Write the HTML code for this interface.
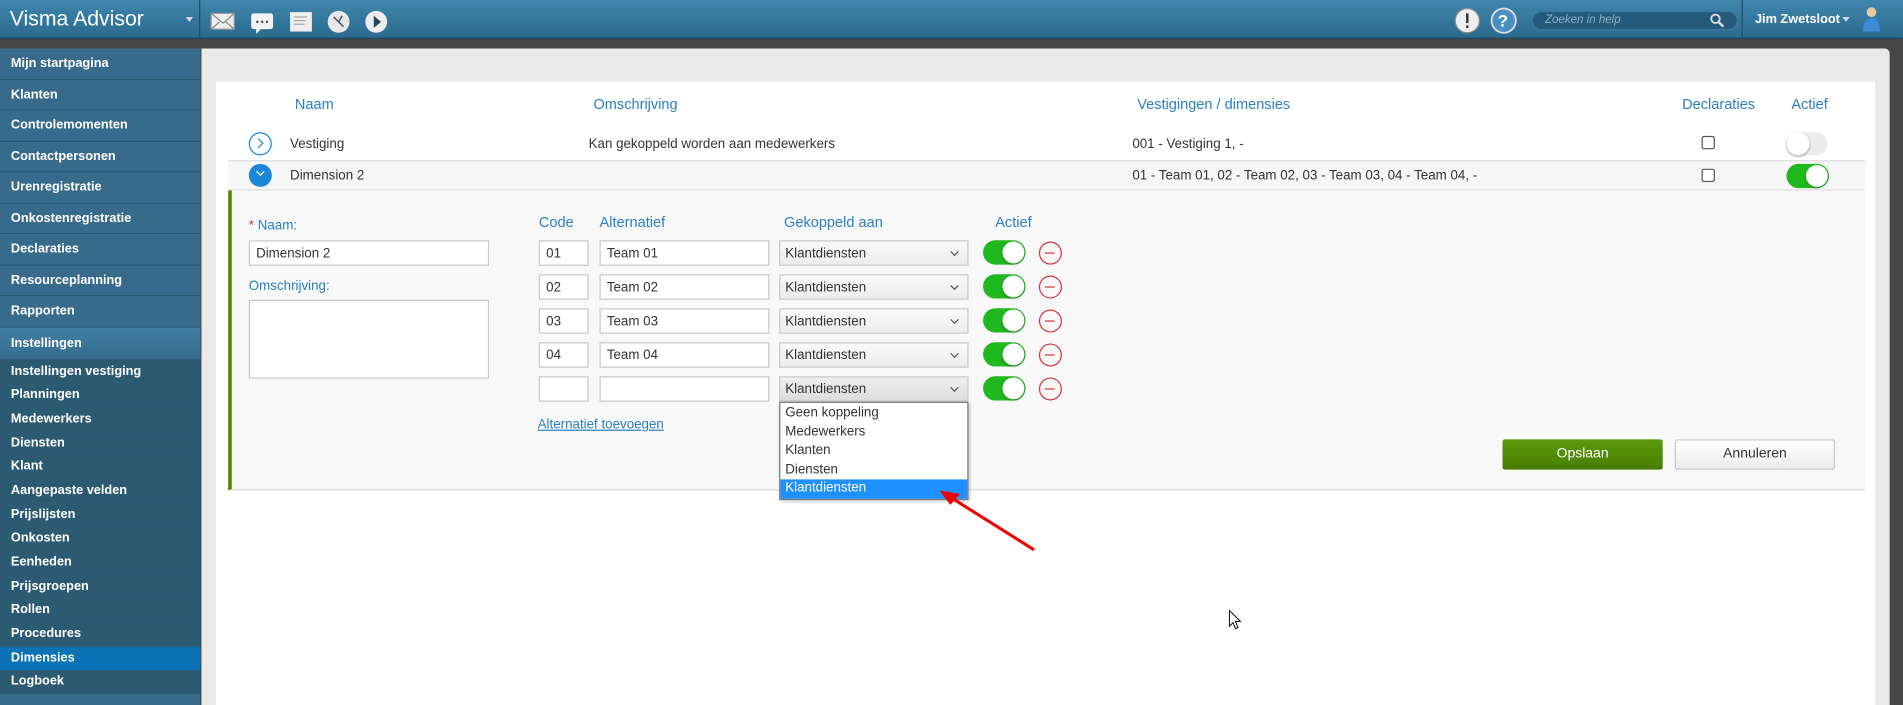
<!DOCTYPE html>
<html><head><meta charset="utf-8"><style>
*{box-sizing:border-box;margin:0;padding:0}
html,body{width:1903px;height:705px;overflow:hidden;background:#4a4a4a}
#s{position:absolute;left:0;top:0;width:1568px;height:581px;transform:scale(1.21365);transform-origin:0 0;font-family:"Liberation Sans",sans-serif;font-size:11px;color:#333;background:#464646}
.a{position:absolute}
#top{left:0;top:0;width:1568px;height:32px;background:linear-gradient(#3f86ad,#2b6a8e);border-bottom:1px solid #1e4a63}
.side{left:0;width:165px;color:#fff;font-size:10.5px;font-weight:bold;padding-left:9px}
.t1{height:25.5px;line-height:25px;background:#386b8b;border-bottom:1px solid #2a5670}
.t2{height:19.7px;line-height:19.7px;background:#2d5a73}
.h{color:#2b7fc3;font-size:12px}
.inp{background:#fff;border:1px solid #c8c8c8;height:21px;line-height:20px;padding-left:5px;font-size:11px;color:#333}
.sel{background:linear-gradient(#fafafa,#ececec);border:1px solid #c8c8c8;height:21px;line-height:21px;padding-left:4px;font-size:11px}
.sel:after{content:"";position:absolute;right:8px;top:6px;width:4px;height:4px;border-right:1px solid #555;border-bottom:1px solid #555;transform:rotate(45deg)}
.tg{width:35px;height:20px;border-radius:10px;background:#1fb81f}
.tg:after{content:"";position:absolute;right:1px;top:1px;width:18px;height:18px;border-radius:50%;background:#fff;box-shadow:0 1px 2px rgba(0,0,0,.3)}
.mn{width:19px;height:19px;border:1.5px solid #d9343f;border-radius:50%}
.mn:after{content:"";position:absolute;left:4px;top:7.5px;width:8px;height:1.5px;background:#d9343f}
.cb{width:11px;height:11px;border:1px solid #555;border-radius:2px;background:#fff}
</style></head><body><div id="s">
<div id="top" class="a">
<div class="a" style="left:8px;top:5px;color:#fff;font-size:17.5px">Visma Advisor</div>
<div class="a" style="left:153px;top:14px;border:3px solid transparent;border-top:4px solid #dde">
</div>
<div class="a" style="left:164px;top:0;width:1px;height:32px;background:#1f4f6a"></div>
<svg class="a" style="left:173px;top:8px" width="160" height="20"><rect x="1" y="3" width="19" height="13" fill="#eee" stroke="#999"/><path d="M1 3l10 8 9-8M1 16l7-6M20 16l-7-6" fill="none" stroke="#888"/>
<rect x="34" y="3" width="18" height="13" rx="2" fill="#f2f2f2"/><path d="M38 16l0 4 4-4z" fill="#f2f2f2"/><circle cx="39" cy="10" r="1" fill="#444"/><circle cx="43" cy="10" r="1" fill="#444"/><circle cx="47" cy="10" r="1" fill="#444"/>
<rect x="66" y="2" width="18" height="16" fill="#eee"/><path d="M69 6h11M69 9h10M69 12h9" stroke="#aaa"/>
<circle cx="106" cy="10" r="9" fill="#e8e8e8"/><path d="M106 10l-4-4M106 10l4 4M106 10l3-5" stroke="#556" stroke-width="1.3"/>
<circle cx="137" cy="10" r="9" fill="#ededed"/><path d="M135 5l6 5-6 5z" fill="#245"/></svg>
<svg class="a" style="left:1198px;top:6px" width="60" height="22"><circle cx="11" cy="11" r="10" fill="#eee" stroke="#888"/><rect x="10" y="5" width="2" height="8" fill="#333"/><rect x="10" y="15" width="2" height="2" fill="#333"/><circle cx="41" cy="11" r="10" fill="#4a8fc0" stroke="#ddd" stroke-width="1.5"/><text x="36" y="16" fill="#fff" font-size="14" font-family="Liberation Sans" font-weight="bold">?</text></svg>
<div class="a" style="left:1262px;top:9px;width:170px;height:16px;border-radius:8px;background:#245b7a;border:1px solid #3d7aa0;color:#8fb0c4;font-style:italic;font-size:9.5px;line-height:14px;padding-left:10px">Zoeken in help</div>
<svg class="a" style="left:1408px;top:10px" width="14" height="14"><circle cx="5.5" cy="5.5" r="3.5" fill="none" stroke="#ddd" stroke-width="1.5"/><path d="M8 8l4 4" stroke="#ddd" stroke-width="2"/></svg>
<div class="a" style="left:1435px;top:0;width:1px;height:32px;background:#1f4f6a"></div>
<div class="a" style="left:1446px;top:10px;color:#fff;font-weight:bold;font-size:10.5px">Jim Zwetsloot</div>
<div class="a" style="left:1518px;top:14px;border:3px solid transparent;border-top:4px solid #cde"></div>
<svg class="a" style="left:1533px;top:5px" width="18" height="22"><circle cx="9" cy="5" r="4" fill="#e8c9a0"/><path d="M2 21q0-11 7-11t7 11z" fill="#3a8ad6"/></svg>
</div>
<div class="a" style="left:0;top:40px;width:165px;height:541px;background:#386b8b"></div>
<div class="a" style="left:0;top:40px">
<div class="side t1">Mijn startpagina</div><div class="side t1">Klanten</div><div class="side t1">Controlemomenten</div><div class="side t1">Contactpersonen</div><div class="side t1">Urenregistratie</div><div class="side t1">Onkostenregistratie</div><div class="side t1">Declaraties</div><div class="side t1">Resourceplanning</div><div class="side t1">Rapporten</div>
<div class="side t1" style="background:linear-gradient(#427fa5,#356c8d);height:27px;line-height:26px">Instellingen</div>
<div class="side t2">Instellingen vestiging</div><div class="side t2">Planningen</div><div class="side t2">Medewerkers</div><div class="side t2">Diensten</div><div class="side t2">Klant</div><div class="side t2">Aangepaste velden</div><div class="side t2">Prijslijsten</div><div class="side t2">Onkosten</div><div class="side t2">Eenheden</div><div class="side t2">Prijsgroepen</div><div class="side t2">Rollen</div><div class="side t2">Procedures</div><div class="side t2" style="background:#0b73b5">Dimensies</div><div class="side t2">Logboek</div>
</div>
<div class="a" style="left:166px;top:40px;width:1391px;height:541px;background:#e9e9e9;border-radius:0 4px 0 0"></div>
<div class="a" style="left:178px;top:67px;width:1367px;height:514px;background:#fff"></div>
<div class="a h" style="left:243px;top:79px">Naam</div><div class="a h" style="left:489px;top:79px">Omschrijving</div><div class="a h" style="left:937px;top:79px">Vestigingen / dimensies</div><div class="a h" style="left:1386px;top:79px">Declaraties</div><div class="a h" style="left:1476px;top:79px">Actief</div>
<div class="a" style="left:205px;top:109px;width:19px;height:19px;border:1.5px solid #1a86d6;border-radius:50%"></div>
<div class="a" style="left:210px;top:115px;width:6px;height:6px;border-right:1.5px solid #1a86d6;border-top:1.5px solid #1a86d6;transform:rotate(45deg)"></div>
<div class="a" style="left:239px;top:113px">Vestiging</div><div class="a" style="left:485px;top:113px">Kan gekoppeld worden aan medewerkers</div><div class="a" style="left:933px;top:113px">001 - Vestiging 1, -</div>
<div class="a cb" style="left:1402px;top:112px"></div>
<div class="a" style="left:1472px;top:109px;width:34px;height:19px;border-radius:10px;background:#ececec"></div><div class="a" style="left:1472px;top:109px;width:19px;height:19px;border-radius:50%;background:#fff;box-shadow:0 1px 2px rgba(0,0,0,.4)"></div>
<div class="a" style="left:188px;top:132px;width:1349px;height:25px;background:#f6f6f6;border-top:1px solid #ddd;border-bottom:1px solid #ddd"></div>
<div class="a" style="left:205px;top:135px;width:19px;height:19px;background:#1a86d6;border-radius:50%"></div>
<div class="a" style="left:212px;top:139px;width:5px;height:5px;border-right:1.5px solid #fff;border-bottom:1.5px solid #fff;transform:rotate(45deg)"></div>
<div class="a" style="left:239px;top:139px">Dimension 2</div><div class="a" style="left:933px;top:139px">01 - Team 01, 02 - Team 02, 03 - Team 03, 04 - Team 04, -</div>
<div class="a cb" style="left:1402px;top:139px"></div>
<div class="a tg" style="left:1472px;top:135px"></div>
<div class="a" style="left:188px;top:157px;width:1349px;height:247px;background:#f8f8f8;border-left:3px solid #4f8a02;border-bottom:1px solid #ddd"></div>
<div class="a h" style="left:205px;top:180px;font-size:11px"><span style="color:#d33">*</span> Naam:</div>
<div class="a inp" style="left:205px;top:198px;width:198px">Dimension 2</div>
<div class="a h" style="left:205px;top:230px;font-size:11px">Omschrijving:</div>
<div class="a inp" style="left:205px;top:247px;width:198px;height:65px"></div>
<div class="a h" style="left:444px;top:176px">Code</div><div class="a h" style="left:494px;top:176px">Alternatief</div><div class="a h" style="left:646px;top:176px">Gekoppeld aan</div><div class="a h" style="left:820px;top:176px">Actief</div>
<div class="a inp" style="left:444px;top:198px;width:41px">01</div><div class="a inp" style="left:494px;top:198px;width:140px">Team 01</div><div class="a sel" style="left:642px;top:198px;width:156px">Klantdiensten</div><div class="a tg" style="left:810px;top:198px"></div><div class="a mn" style="left:856px;top:199px"></div>
<div class="a inp" style="left:444px;top:226px;width:41px">02</div><div class="a inp" style="left:494px;top:226px;width:140px">Team 02</div><div class="a sel" style="left:642px;top:226px;width:156px">Klantdiensten</div><div class="a tg" style="left:810px;top:226px"></div><div class="a mn" style="left:856px;top:227px"></div>
<div class="a inp" style="left:444px;top:254px;width:41px">03</div><div class="a inp" style="left:494px;top:254px;width:140px">Team 03</div><div class="a sel" style="left:642px;top:254px;width:156px">Klantdiensten</div><div class="a tg" style="left:810px;top:254px"></div><div class="a mn" style="left:856px;top:255px"></div>
<div class="a inp" style="left:444px;top:282px;width:41px">04</div><div class="a inp" style="left:494px;top:282px;width:140px">Team 04</div><div class="a sel" style="left:642px;top:282px;width:156px">Klantdiensten</div><div class="a tg" style="left:810px;top:282px"></div><div class="a mn" style="left:856px;top:283px"></div>
<div class="a inp" style="left:444px;top:310px;width:41px"></div><div class="a inp" style="left:494px;top:310px;width:140px"></div><div class="a sel" style="left:642px;top:310px;width:156px;background:linear-gradient(#eee,#ddd)">Klantdiensten</div><div class="a tg" style="left:810px;top:310px"></div><div class="a mn" style="left:856px;top:311px"></div>
<div class="a" style="left:443px;top:344px;color:#2b7fc3;text-decoration:underline;font-size:11px">Alternatief toevoegen</div>
<div class="a" style="left:642px;top:331px;width:156px;height:81px;background:#fff;border:1px solid #777;box-shadow:1px 1px 3px rgba(0,0,0,.3);font-size:11px;line-height:15.5px;padding-top:1px">
<div style="padding-left:4px">Geen koppeling</div><div style="padding-left:4px">Medewerkers</div><div style="padding-left:4px">Klanten</div><div style="padding-left:4px">Diensten</div><div style="padding-left:4px;background:#1e90ff;color:#fff">Klantdiensten</div></div>
<svg class="a" style="left:760px;top:395px" width="100" height="65"><path d="M92 58L22 14" stroke="#e00" stroke-width="2.5"/><path d="M14 9l17 3-8 9z" fill="#e00"/></svg>
<div class="a" style="left:1238px;top:362px;width:132px;height:25px;background:linear-gradient(#5a9a0a,#477d02);border-radius:2px;color:#fff;text-align:center;line-height:25px;font-size:11.5px">Opslaan</div>
<div class="a" style="left:1380px;top:362px;width:132px;height:25px;background:linear-gradient(#fff,#ececec);border:1px solid #c8c8c8;border-radius:2px;text-align:center;line-height:23px;font-size:11.5px">Annuleren</div>
<svg class="a" style="left:1012px;top:502px" width="12" height="18"><path d="M1 1v13l3-3 2 5 2-1-2-5h4z" fill="#fff" stroke="#000" stroke-width=".8"/></svg>
</div></body></html>
